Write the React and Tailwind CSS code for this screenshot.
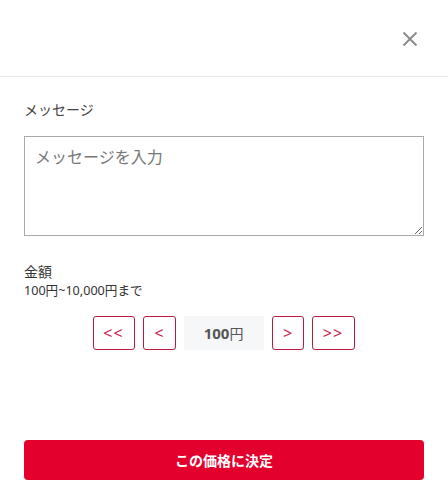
import React from 'react';

const App = () => {
  const font = { fontFamily: '"Noto Sans", "Noto Sans CJK JP", sans-serif' };

  return (
    <div className="w-[448px] h-[503px] bg-white flex flex-col text-[#333]" style={font}>
      {/* Header */}
      <div className="h-[77px] border-b border-[#e8e8e8] flex items-center justify-end pr-[30px] shrink-0">
        <button className="w-[16px] h-[16px] flex items-center justify-center mt-[1px]">
          <svg width="16" height="16" viewBox="0 0 16 16" fill="none">
            <path d="M1.5 1.5L14.5 14.5M14.5 1.5L1.5 14.5" stroke="#888" strokeWidth="1.8" />
          </svg>
        </button>
      </div>

      {/* Body */}
      <div className="flex flex-col px-[24px] pt-[23px] flex-1">
        <p className="text-[14px] leading-[20px] text-[#444]">メッセージ</p>
        <textarea
          className="mt-[16px] w-[400px] h-[100px] border border-[#a9a9a9] px-[10px] py-[8px] text-[16px] leading-[24px] placeholder:text-[#777] outline-none"
          placeholder="メッセージを入力"
        />

        <p className="mt-[26px] text-[14px] leading-[20px] text-[#333]">金額</p>
        <p className="text-[12.6px] leading-[18px] text-[#333]">100円~10,000円まで</p>

        <div className="mt-[16px] flex items-center justify-center gap-[8px] h-[34px] ml-[-1px]">
          <button className="w-[42px] h-[34px] border border-[#bd1a40] rounded-[3px] text-[#c8234a] text-[16px] tracking-[1px]">&lt;&lt;</button>
          <button className="w-[33px] h-[34px] border border-[#bd1a40] rounded-[3px] text-[#c8234a] text-[16px]">&lt;</button>
          <div className="w-[80px] h-[34px] bg-[#f6f7f9] flex items-center justify-center text-[#555] font-bold text-[15px]">
            100<span className="text-[14px] font-normal">円</span>
          </div>
          <button className="w-[32px] h-[34px] border border-[#bd1a40] rounded-[3px] text-[#c8234a] text-[16px]">&gt;</button>
          <button className="w-[43px] h-[34px] border border-[#bd1a40] rounded-[3px] text-[#c8234a] text-[16px] tracking-[1px]">&gt;&gt;</button>
        </div>

        <button className="mt-[90px] w-[400px] h-[40px] bg-[#e3002d] rounded-[4px] text-white font-bold text-[14px]">
          この価格に決定
        </button>
      </div>
    </div>
  );
};

export default App;
